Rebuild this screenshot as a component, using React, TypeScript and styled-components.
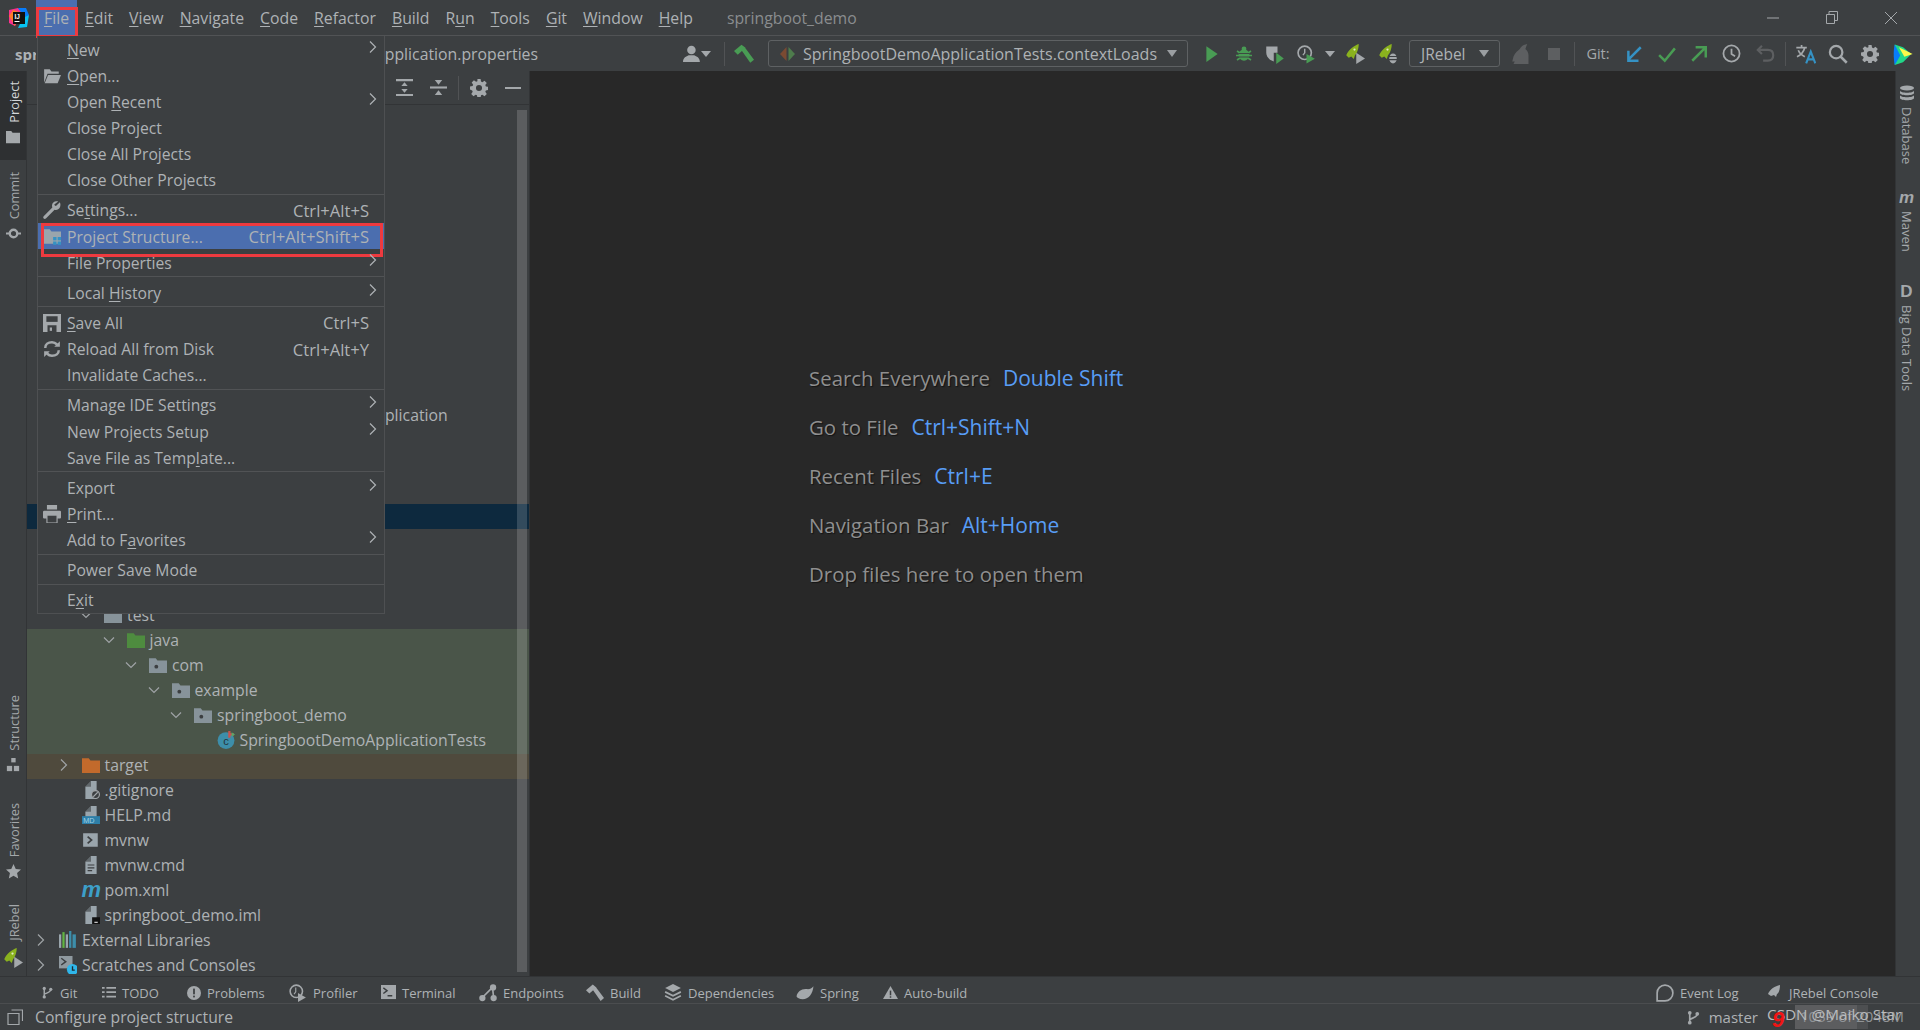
import React from 'react'
import styled, { createGlobalStyle } from 'styled-components'

const UI_FONT = '"Open Sans", "Noto Sans", "Liberation Sans", sans-serif'

const COLORS = {
  chrome: '#3c3f41',
  editor: '#282828',
  line: '#515355',
  dark: '#323436',
  text: '#aeb2b5',
  dim: '#8a8d8f',
  highlight: '#4b6eaf',
  red: '#ee3a3f',
  selected: '#0d293e',
  green: '#4a5549',
  brown: '#4f4a3d',
  icon: '#a4a8ab',
  run: '#499c54',
  blue: '#3592c4',
  link: '#589df6',
}

const GlobalStyle = createGlobalStyle`
  html, body {
    margin: 0;
    padding: 0;
    background: ${COLORS.chrome};
  }
  * {
    box-sizing: border-box;
  }
`

const Page = styled.div`
  position: relative;
  width: 1920px;
  height: 1030px;
  display: flex;
  flex-direction: column;
  overflow: hidden;
  background: ${COLORS.chrome};
  color: ${COLORS.text};
  font-family: ${UI_FONT};
  font-size: 15.8px;
`

const TitleBar = styled.div`
  height: 36px;
  flex: none;
  display: flex;
  align-items: center;
  padding-left: 36px;
  border-bottom: 1px solid ${COLORS.line};
`

const AppLogo = styled.div`
  position: absolute;
  left: 9px;
  top: 8px;
  width: 20px;
  height: 20px;
`

const MenuBarItem = styled.div<{ $open?: boolean }>`
  position: relative;
  height: 35px;
  padding: 0 8px;
  display: flex;
  align-items: center;
  background: ${(p) => (p.$open ? COLORS.highlight : 'transparent')};

  ${(p) =>
    p.$open &&
    `
    &::after {
      content: '';
      position: absolute;
      left: 0;
      right: -1px;
      top: 7px;
      bottom: -3px;
      border: 3px solid ${COLORS.red};
    }
  `}
`

const ProjectTitle = styled.div`
  margin-left: 26px;
  color: ${COLORS.dim};
`

const WindowButtons = styled.div`
  margin-left: auto;
  display: flex;
  align-items: center;
  padding-right: 23px;
  gap: 47px;
  color: ${COLORS.icon};
`

const ToolBar = styled.div`
  height: 35px;
  flex: none;
  display: flex;
  align-items: center;
  padding-right: 3px;
`

const RootCrumb = styled.div`
  width: 36px;
  padding-left: 15px;
  overflow: hidden;
  font-weight: 700;
  font-size: 15px;
  color: ${COLORS.text};
`

const FileCrumb = styled.div`
  margin-left: 340px;
`

const ToolGroup = styled.div`
  margin-left: auto;
  display: flex;
  align-items: center;
  font-size: 14.5px;
`

const ToolSlot = styled.div<{ $w: number }>`
  width: ${(p) => p.$w}px;
  flex: none;
  display: flex;
  align-items: center;
  justify-content: center;
  color: ${COLORS.icon};
`

const ToolSep = styled.div`
  width: 1px;
  height: 24px;
  background: ${COLORS.line};
`

const Combo = styled.div<{ $w: number; $ml: number }>`
  width: ${(p) => p.$w}px;
  margin-left: ${(p) => p.$ml}px;
  height: 27px;
  flex: none;
  display: flex;
  align-items: center;
  justify-content: space-between;
  padding: 0 10px 0 11px;
  border: 1px solid #5e6163;
  border-radius: 3px;
`

const ComboLabel = styled.div<{ $size: number }>`
  display: flex;
  align-items: center;
  gap: 8px;
  font-size: ${(p) => p.$size}px;
`

const Caret = styled.div`
  width: 0;
  height: 0;
  border-left: 5.5px solid transparent;
  border-right: 5.5px solid transparent;
  border-top: 7px solid #9a9ea1;
`

const Body = styled.div`
  flex: 1;
  min-height: 0;
  display: flex;
`

const LeftStripe = styled.div`
  width: 27px;
  flex: none;
  display: flex;
  flex-direction: column;
  border-right: 1px solid ${COLORS.dark};
`

const StripeTab = styled.div<{ $active?: boolean; $pad: string }>`
  display: flex;
  flex-direction: column;
  align-items: center;
  gap: 7px;
  padding: ${(p) => p.$pad};
  background: ${(p) => (p.$active ? '#2e3032' : 'transparent')};
  color: ${(p) => (p.$active ? '#d4d6d8' : COLORS.icon)};
`

const StripeBottom = styled.div`
  margin-top: auto;
  display: flex;
  flex-direction: column;
`

const StripeText = styled.div`
  margin-left: 2px;
  writing-mode: vertical-rl;
  transform: rotate(180deg);
  font-size: 12.8px;
  line-height: 16px;
`

const ProjectPanel = styled.div`
  position: relative;
  width: 503px;
  flex: none;
  display: flex;
  flex-direction: column;
  border-right: 1px solid ${COLORS.dark};
`

const PanelHeader = styled.div`
  height: 34px;
  margin-bottom: -1px;
  flex: none;
  display: flex;
  align-items: center;
  justify-content: flex-end;
  gap: 17px;
  padding-right: 8px;
  color: ${COLORS.icon};
  border-bottom: 1px solid ${COLORS.dark};
`

const PanelHeaderSep = styled.div`
  width: 1px;
  height: 24px;
  margin: 0 -6px;
  background: ${COLORS.line};
`

const TreeRow = styled.div<{ $tone?: 'selected' | 'green' | 'brown'; $depth: number }>`
  height: 25px;
  flex: none;
  display: flex;
  align-items: center;
  padding-left: ${(p) => 10 + p.$depth * 22.5}px;
  padding-bottom: 3px;
  white-space: nowrap;
  background: ${(p) =>
    p.$tone === 'selected'
      ? COLORS.selected
      : p.$tone === 'green'
      ? COLORS.green
      : p.$tone === 'brown'
      ? COLORS.brown
      : 'transparent'};
`

const TreeArrow = styled.div`
  width: 24px;
  margin-left: -2px;
  flex: none;
  display: flex;
  align-items: center;
  color: #9fa3a6;
`

const TreeIcon = styled.div`
  width: 23px;
  flex: none;
  display: flex;
  align-items: center;
`

const ScrollThumb = styled.div`
  position: absolute;
  left: 490px;
  top: 39px;
  width: 10px;
  height: 862px;
  background: rgba(255, 255, 255, 0.16);
`

const Editor = styled.div`
  flex: 1;
  min-width: 0;
  display: flex;
  flex-direction: column;
  padding: 290px 0 0 279px;
  background: ${COLORS.editor};
`

const HintRow = styled.div`
  height: 49px;
  display: flex;
  gap: 13px;
  font-size: 20.4px;
  line-height: 34px;
  color: #8f8f8f;
  text-shadow: 1px 1px 1px #141414;
`

const HintKey = styled.span`
  font-size: 21px;
  color: ${COLORS.link};
  text-shadow: none;
`

const RightStripe = styled.div`
  width: 25px;
  flex: none;
  display: flex;
  flex-direction: column;
  align-items: center;
  padding: 14px 3px 0 0;
  color: ${COLORS.icon};
  border-left: 1px solid ${COLORS.dark};
`

const RightTab = styled.div<{ $mb: number }>`
  display: flex;
  flex-direction: column;
  align-items: center;
  gap: 6px;
  margin-bottom: ${(p) => p.$mb}px;
`

const RightText = styled.div`
  writing-mode: vertical-rl;
  font-size: 13px;
  line-height: 16px;
`

const BoldMark = styled.div<{ $italic?: boolean }>`
  font-family: 'Liberation Sans', sans-serif;
  font-weight: 700;
  font-size: 17px;
  line-height: 14px;
  font-style: ${(p) => (p.$italic ? 'italic' : 'normal')};
`

const PomMark = styled.div`
  font-family: 'Liberation Sans', sans-serif;
  font-weight: 700;
  font-style: italic;
  font-size: 22px;
  line-height: 18px;
  color: #3d9fc9;
`

const ToolWindowBar = styled.div`
  height: 28px;
  flex: none;
  display: flex;
  align-items: center;
  padding: 5px 0 0 41px;
  font-size: 13px;
  border-top: 1px solid ${COLORS.dark};
  border-bottom: 1px solid #4b4d4f;
`

const ToolWindowItem = styled.div<{ $w: number }>`
  width: ${(p) => p.$w}px;
  flex: none;
  display: flex;
  align-items: center;
  gap: 6px;
  white-space: nowrap;
`

const ToolWindowIcon = styled.div`
  flex: none;
  display: flex;
  color: ${COLORS.icon};
`

const ToolWindowRight = styled.div`
  margin-left: auto;
  display: flex;
  align-items: center;
  padding-right: 41px;
`

const StatusBar = styled.div`
  position: relative;
  height: 26px;
  flex: none;
  display: flex;
  align-items: center;
  padding-left: 7px;
  gap: 12px;
`

const StatusText = styled.div`
  font-size: 15.7px;
`

const StatusRight = styled.div`
  margin-left: auto;
  display: flex;
  align-items: center;
  gap: 8px;
  padding-right: 52px;
  font-size: 15px;
`

const MemoryBar = styled.div`
  position: relative;
  width: 73px;
  height: 24px;
  margin-left: 29px;
  background: #4d4f51;
`

const MemoryFill = styled.div`
  width: 62px;
  height: 24px;
  background: #5c5d5f;
`

const MemoryLabel = styled.div`
  position: absolute;
  left: 5px;
  top: 1px;
  white-space: nowrap;
  color: #909396;
`

const Watermark = styled.div`
  position: absolute;
  left: 1767px;
  top: 0;
  font-size: 15.3px;
  white-space: nowrap;
  color: #b9bbbd;
`

const WatermarkNine = styled.span`
  position: absolute;
  left: 5px;
  top: 6px;
  font-family: 'Liberation Sans', sans-serif;
  font-weight: 700;
  font-style: italic;
  font-size: 22px;
  line-height: 20px;
  color: #f01414;
`

const FileMenu = styled.div`
  position: absolute;
  left: 37px;
  top: 36px;
  width: 348px;
  background: ${COLORS.chrome};
  border: 1px solid #4e5052;
  border-top: none;
  z-index: 5;
  font-size: 15.7px;
`

const MenuRow = styled.div<{ $active?: boolean }>`
  position: relative;
  height: 26.15px;
  display: flex;
  align-items: center;
  padding: 1px 5px 0 5px;
  background: ${(p) => (p.$active ? COLORS.highlight : 'transparent')};

  ${(p) =>
    p.$active &&
    `
    &::after {
      content: '';
      position: absolute;
      left: 3px;
      right: 1px;
      top: 0;
      bottom: -8px;
      border: 3px solid ${COLORS.red};
    }
  `}
`

const MenuIcon = styled.div`
  width: 24px;
  flex: none;
  display: flex;
  align-items: center;
  color: ${COLORS.icon};
`

const MenuLabel = styled.div`
  flex: 1;
  white-space: nowrap;
`

const MenuShortcut = styled.div`
  padding-right: 10px;
  font-size: 16.6px;
`

const MenuArrow = styled.div`
  display: flex;
  margin-top: -6px;
  color: ${COLORS.text};
`

const MenuSep = styled.div`
  height: 1px;
  margin: 1px 0 2px;
  background: #515355;
`

const Key = styled.span`
  text-decoration: underline;
  text-underline-offset: 2px;
  text-decoration-thickness: 1px;
`

type IconProps = { size?: number }

const Svg = ({ size = 18, children }: IconProps & { children: React.ReactNode }) => (
  <svg width={size} height={size} viewBox="0 0 16 16" fill="none">
    {children}
  </svg>
)

const Chevron = ({ open }: { open?: boolean }) => (
  <svg width="12" height="12" viewBox="0 0 12 12" fill="none">
    <path d={open ? 'M1 3.5l5 5 5-5' : 'M3 .5l5.5 5.5L3 11.5'} stroke="currentColor" strokeWidth="1.2" />
  </svg>
)

const Folder = ({ color, dot }: { color: string; dot?: boolean }) => (
  <Svg>
    <path d="M0 2h6l1.5 2H16v11H0z" fill={color} />
    {dot && <circle cx="6.5" cy="9.5" r="1.7" fill="#3c3f41" />}
  </Svg>
)

const FilePage = ({ children }: { children?: React.ReactNode }) => (
  <Svg>
    <path d="M8 0h5v16H3V5z" fill="#9aa5ac" />
    <path d="M8 0v5H3z" fill="#3c3f41" opacity="0.6" />
    {children}
  </Svg>
)

const ClassIcon = () => (
  <Svg>
    <circle cx="8" cy="8.5" r="7.5" fill="#3d8eaa" />
    <text x="8" y="12" textAnchor="middle" fontSize="10" fontFamily="Liberation Sans" fill="#24353d">
      c
    </text>
    <path d="M10 0h2v2h3v2h-3v2h-2z" fill="#c75450" />
    <path d="M13 1l3 2-3 2z" fill="#59a869" />
  </Svg>
)

const LibrariesIcon = () => (
  <Svg>
    <rect x="0" y="3" width="2" height="12" fill="#9aa5ac" />
    <rect x="3" y="1" width="2" height="14" fill="#62b543" />
    <rect x="6" y="3" width="2" height="12" fill="#9aa5ac" />
    <rect x="9" y="0" width="2" height="15" fill="#3d8eaa" />
    <rect x="12" y="3" width="3" height="12" fill="#3d8eaa" />
  </Svg>
)

const ScratchIcon = () => (
  <Svg>
    <rect x="0" y="0" width="12" height="11" fill="#8f999f" />
    <path d="M2 2l4 3-4 3" stroke="#3c3f41" strokeWidth="1.3" />
    <circle cx="12" cy="12" r="5" fill="#2fb6ea" />
    <path d="M12 9v3.5h2" stroke="#1e2a30" strokeWidth="1.2" />
  </Svg>
)

const Hammer = ({ color, size = 20 }: { color: string; size?: number }) => (
  <Svg size={size}>
    <path d="M0 5.500L6 .5l3.200 2.500L3 8.500z" fill={color} />
    <path d="M6 5l2.700-2.300L16 12.500 13 15z" fill={color} />
  </Svg>
)

const Play = () => (
  <Svg size={18}>
    <path d="M3 1l10 7-10 7z" fill="#499c54" />
  </Svg>
)

const Bug = () => (
  <Svg size={20}>
    <ellipse cx="8" cy="9" rx="5.4" ry="5.8" fill="#499c54" />
    <circle cx="8" cy="3" r="2.4" fill="#499c54" />
    <path d="M1 5l3 2M15 5l-3 2M0 9.5h4M16 9.5h-4M1 14l3-2M15 14l-3-2" stroke="#499c54" strokeWidth="1.6" />
    <path d="M3 7.5h10M3 11h10" stroke="#3c3f41" strokeWidth="0.9" />
  </Svg>
)

const Coverage = () => (
  <Svg size={20}>
    <path d="M1 2h9v5H7v7l-3-1.5C2 11 1 9 1 7z" fill="#a4a8ab" />
    <path d="M9 7l6 4.5L9 16z" fill="#499c54" />
  </Svg>
)

const Profiler = () => (
  <Svg size={20}>
    <circle cx="6.5" cy="7" r="5.6" stroke="#a4a8ab" strokeWidth="1.4" />
    <path d="M6.5 3.5V7L5 9" stroke="#a4a8ab" strokeWidth="1.2" />
    <path d="M8 8l7 4-7 4z" fill="#499c54" />
  </Svg>
)

const Rocket = ({ badge }: { badge: 'play' | 'bug' }) => (
  <Svg size={20}>
    <path d="M1 9C3 4 8 1 11 0c0 3-1 7-3 9l-1 3-2-2-2 1z" fill="#8ab21e" />
    <circle cx="7.6" cy="4.4" r="0.9" fill="#dfe8c0" />
    {badge === 'play' ? (
      <path d="M9 7l7 4.5L9 16z" fill="#a4a8ab" />
    ) : (
      <>
        <ellipse cx="12" cy="11.5" rx="3" ry="4" fill="#a4a8ab" />
        <path d="M8 10h8M8 12.5h8" stroke="#3c3f41" strokeWidth="0.9" />
      </>
    )}
  </Svg>
)

const Rabbit = () => (
  <Svg size={20}>
    <path d="M2 10c1-3 4-5 5-6 1-2 3-3.5 6-4-1 2-1 3-1.5 4 1.5 1 2.500 3 2.500 5v7H2l1-2H1z" fill="#5d5f61" />
  </Svg>
)

const Stop = () => (
  <svg width="12" height="12" viewBox="0 0 12 12">
    <rect width="12" height="12" fill="#5d5f61" />
  </svg>
)

const ArrowIcon = ({ d, color }: { d: string; color: string }) => (
  <Svg size={18}>
    <path d={d} stroke={color} strokeWidth="2.2" />
  </Svg>
)

const Clock = () => (
  <Svg size={19}>
    <circle cx="8" cy="8" r="6.8" stroke="#a4a8ab" strokeWidth="1.5" />
    <path d="M8 4v4.5l3 1.8" stroke="#a4a8ab" strokeWidth="1.5" />
  </Svg>
)

const Undo = () => (
  <Svg size={19}>
    <path d="M1.5 5H10c3 0 4.500 2 4.500 4.500S13 14 10 14H6" stroke="#5d5f61" strokeWidth="1.8" />
    <path d="M5 1.500L1.500 5 5 8.500" stroke="#5d5f61" strokeWidth="1.8" />
  </Svg>
)

const Translate = () => (
  <Svg size={21}>
    <path d="M1 3.500h8M5 1.500v2M7.500 3.500C6.500 7 4 9.500 1.500 10.500M2.500 5.500c1 2.500 3 4 5 5" stroke="#a4a8ab" strokeWidth="1.3" />
    <path d="M8.500 15.500L12 6.500l3.500 9M10 12.500h4" stroke="#3592c4" strokeWidth="1.6" />
  </Svg>
)

const Search = () => (
  <Svg size={20}>
    <circle cx="6.5" cy="6.5" r="5" stroke="#a4a8ab" strokeWidth="1.8" />
    <path d="M10 10l5 5" stroke="#a4a8ab" strokeWidth="2" />
  </Svg>
)

const Gear = ({ size = 18 }: IconProps) => (
  <Svg size={size}>
    <path
      d="M6.600 0h2.800l.4 2.300 1.200.5 1.900-1.300 2 2-1.300 1.900.5 1.200 2.300.4v2.800l-2.300.4-.5 1.200 1.300 1.900-2 2-1.900-1.300-1.200.5-.4 2.300H6.600l-.4-2.300-1.200-.5-1.900 1.300-2-2 1.300-1.900-.5-1.200L0 9.400V6.600l2.300-.4.5-1.200-1.300-1.900 2-2 1.900 1.300 1.200-.5zM8 5.300a2.700 2.700 0 100 5.400 2.700 2.700 0 000-5.400z"
      fill="#a4a8ab"
    />
  </Svg>
)

const ToolboxLogo = () => (
  <Svg size={22}>
    <path d="M2 1l6 2 6 5-6 6-6 2z" fill="#21d789" />
    <path d="M2 1c-1 4-1 10 0 15l4-7z" fill="#087cfa" />
    <path d="M5 3l10 5-6 2z" fill="#fcf84a" />
  </Svg>
)

const UserIcon = () => (
  <Svg size={18}>
    <circle cx="7.5" cy="4.5" r="3.8" fill="#a4a8ab" />
    <path d="M0 15c0-4 3-5 5-6h5c2 1 5 2 5 6z" fill="#a4a8ab" />
  </Svg>
)

const Triangle = () => (
  <svg width="10" height="6" viewBox="0 0 10 6">
    <path d="M0 0h10L5 6z" fill="#a4a8ab" />
  </svg>
)

const RunConfigIcon = () => (
  <svg width="15" height="16" viewBox="0 0 15 16">
    <path d="M6.500 1v14L0 8z" fill="#7b4a32" />
    <path d="M8.500 1v14L15 8z" fill="#4e7c4c" />
  </svg>
)

const GitBranch = ({ size = 15 }: IconProps) => (
  <Svg size={size}>
    <circle cx="4" cy="3" r="2" fill="#a4a8ab" />
    <circle cx="4" cy="13.5" r="2" fill="#a4a8ab" />
    <circle cx="12" cy="4" r="2" fill="#a4a8ab" />
    <path d="M4 3v10M12 4c0 4-4 4-8 6" stroke="#a4a8ab" strokeWidth="1.8" />
  </Svg>
)

const IdeaMark = () => (
  <svg width="20" height="20" viewBox="0 0 20 20">
    <path d="M0 2l9-2 4 4-7 14-6-3z" fill="#fc318d" />
    <path d="M9 0h8l3 7-4 3z" fill="#087cfa" />
    <path d="M14 10l6-3-2 12-9 1z" fill="#07c3f2" />
    <path d="M0 8l4-6 6 2-4 14z" fill="#fe7c2a" />
    <rect x="4" y="4" width="12" height="12" fill="#111" />
    <text x="5.5" y="10.8" fontSize="6.5" fontWeight="700" fontFamily="Liberation Sans" fill="#fff">
      IJ
    </text>
    <rect x="5.5" y="13" width="5" height="1" fill="#fff" />
  </svg>
)

const MENU_BAR: [string, number][] = [
  ['File', 0],
  ['Edit', 0],
  ['View', 0],
  ['Navigate', 0],
  ['Code', 0],
  ['Refactor', 0],
  ['Build', 0],
  ['Run', 1],
  ['Tools', 0],
  ['Git', 0],
  ['Window', 0],
  ['Help', 0],
]

type MenuEntry = {
  label: string
  mn?: number
  shortcut?: string
  submenu?: boolean
  active?: boolean
  icon?: React.ReactNode
}

const OpenIcon = () => (
  <Svg>
    <path d="M1 2h5l1.5 2H14v2H4L1 14z" fill="#a4a8ab" />
    <path d="M4.500 7H16l-3 7.500H1.500z" fill="#a4a8ab" />
  </Svg>
)

const WrenchIcon = () => (
  <Svg>
    <path d="M15 1l-3.500 3.500-1-.5-.5-1L13.500.5C11-.5 8 1 8 4c0 .7.100 1.300.3 1.800L.8 13.300c-.8.800-.8 1.600-.2 2.200.6.600 1.500.5 2.200-.2l7.500-7.500c3 1 6-1.500 5-5.800z" fill="#a4a8ab" />
  </Svg>
)

const StructureIcon = () => (
  <Svg>
    <path d="M0 1h6l1.500 2H16v11H0z" fill="#9aa5ac" />
    <rect x="9" y="8" width="3" height="3" fill="#3592c4" />
    <rect x="13" y="8" width="3" height="3" fill="#3592c4" />
    <rect x="9" y="12" width="3" height="3" fill="#3592c4" />
    <rect x="13" y="12" width="3" height="3" fill="#3592c4" />
  </Svg>
)

const SaveIcon = () => (
  <Svg>
    <path d="M0 0h16v16H0z" fill="#a4a8ab" />
    <rect x="3" y="2" width="10" height="5" fill="#3c3f41" />
    <rect x="4" y="10" width="8" height="6" fill="#3c3f41" />
    <rect x="6" y="12" width="2" height="3" fill="#a4a8ab" />
  </Svg>
)

const ReloadIcon = () => (
  <Svg>
    <path d="M2 7c0-3 2.500-5 6-5 2 0 3.500 1 4.500 2M14 9c0 3-2.500 5-6 5-2 0-3.500-1-4.500-2" stroke="#a4a8ab" strokeWidth="2.2" />
    <path d="M15 1v5h-5zM1 15v-5h5z" fill="#a4a8ab" />
  </Svg>
)

const PrintIcon = () => (
  <Svg>
    <rect x="3.5" y="0" width="9" height="4" fill="#a4a8ab" />
    <rect x="0" y="5" width="16" height="7" rx="1" fill="#a4a8ab" />
    <rect x="3.5" y="9" width="9" height="7" fill="#3c3f41" stroke="#a4a8ab" />
  </Svg>
)

const MENU_GROUPS: MenuEntry[][] = [
  [
    { label: 'New', mn: 0, submenu: true },
    { label: 'Open...', mn: 0, icon: <OpenIcon /> },
    { label: 'Open Recent', mn: 5, submenu: true },
    { label: 'Close Project' },
    { label: 'Close All Projects' },
    { label: 'Close Other Projects' },
  ],
  [
    { label: 'Settings...', mn: 2, shortcut: 'Ctrl+Alt+S', icon: <WrenchIcon /> },
    { label: 'Project Structure...', shortcut: 'Ctrl+Alt+Shift+S', active: true, icon: <StructureIcon /> },
    { label: 'File Properties', submenu: true },
  ],
  [{ label: 'Local History', mn: 6, submenu: true }],
  [
    { label: 'Save All', mn: 0, shortcut: 'Ctrl+S', icon: <SaveIcon /> },
    { label: 'Reload All from Disk', shortcut: 'Ctrl+Alt+Y', icon: <ReloadIcon /> },
    { label: 'Invalidate Caches...' },
  ],
  [
    { label: 'Manage IDE Settings', submenu: true },
    { label: 'New Projects Setup', submenu: true },
    { label: 'Save File as Template...', mn: 17 },
  ],
  [
    { label: 'Export', submenu: true },
    { label: 'Print...', mn: 0, icon: <PrintIcon /> },
    { label: 'Add to Favorites', mn: 8, submenu: true },
  ],
  [{ label: 'Power Save Mode' }],
  [{ label: 'Exit', mn: 1 }],
]

type Tree = {
  depth: number
  label?: string
  tone?: 'selected' | 'green' | 'brown'
  arrow?: 'open' | 'closed'
  icon?: React.ReactNode
}

const EdgeMark = () => (
  <Svg>
    <path d="M10 4c3 1 3 8 0 9" stroke="#c08a5e" strokeWidth="1.2" />
  </Svg>
)

const blank = (tone?: Tree['tone']): Tree => ({ depth: 0, tone })

const TREE: Tree[] = [
  { depth: 12.9, icon: <EdgeMark /> },
  ...Array.from({ length: 11 }, () => blank()),
  { depth: 7, label: 'SpringbootDemoApplication', icon: <ClassIcon /> },
  blank(),
  blank(),
  blank(),
  blank('selected'),
  blank(),
  blank(),
  blank(),
  { depth: 2, label: 'test', arrow: 'open', icon: <Folder color="#87939a" /> },
  { depth: 3, label: 'java', arrow: 'open', tone: 'green', icon: <Folder color="#4e8c3f" /> },
  { depth: 4, label: 'com', arrow: 'open', tone: 'green', icon: <Folder color="#87939a" dot /> },
  { depth: 5, label: 'example', arrow: 'open', tone: 'green', icon: <Folder color="#87939a" dot /> },
  { depth: 6, label: 'springboot_demo', arrow: 'open', tone: 'green', icon: <Folder color="#87939a" dot /> },
  { depth: 7, label: 'SpringbootDemoApplicationTests', tone: 'green', icon: <ClassIcon /> },
  { depth: 1, label: 'target', arrow: 'closed', tone: 'brown', icon: <Folder color="#c26a2c" /> },
  {
    depth: 1,
    label: '.gitignore',
    icon: (
      <FilePage>
        <circle cx="12" cy="12" r="3.5" fill="#3c3f41" stroke="#a4a8ab" />
        <path d="M10 14l4-4" stroke="#a4a8ab" />
      </FilePage>
    ),
  },
  {
    depth: 1,
    label: 'HELP.md',
    icon: (
      <FilePage>
        <rect x="0" y="9" width="16" height="7" fill="#2e7fa8" />
        <text x="1" y="15" fontSize="6.5" fontFamily="Liberation Sans" fill="#9fd0e6">
          MD
        </text>
      </FilePage>
    ),
  },
  {
    depth: 1,
    label: 'mvnw',
    icon: (
      <Svg>
        <rect x="1" y="2" width="13" height="12" fill="#9aa5ac" />
        <path d="M5 5l3.5 3L5 11" stroke="#3c3f41" strokeWidth="1.5" />
      </Svg>
    ),
  },
  {
    depth: 1,
    label: 'mvnw.cmd',
    icon: (
      <FilePage>
        <path d="M5 8h6M5 10.5h6M5 13h4" stroke="#3c3f41" />
      </FilePage>
    ),
  },
  { depth: 1, label: 'pom.xml', icon: <PomMark>m</PomMark> },
  {
    depth: 1,
    label: 'springboot_demo.iml',
    icon: (
      <FilePage>
        <rect x="9" y="10" width="7" height="6" fill="#111" />
        <rect x="11" y="14" width="3" height="1" fill="#ddd" />
      </FilePage>
    ),
  },
  { depth: 0, label: 'External Libraries', arrow: 'closed', icon: <LibrariesIcon /> },
  { depth: 0, label: 'Scratches and Consoles', arrow: 'closed', icon: <ScratchIcon /> },
]

const BOTTOM_TOOLS: { label: string; w: number; icon: React.ReactNode }[] = [
  { label: 'Git', w: 61, icon: <GitBranch size={13} /> },
  {
    label: 'TODO',
    w: 85,
    icon: (
      <Svg size={14}>
        <path d="M0 2h3M5 2h11M0 7h3M5 7h11M0 12h3M5 12h11" stroke="#a4a8ab" strokeWidth="2" />
      </Svg>
    ),
  },
  {
    label: 'Problems',
    w: 102,
    icon: (
      <Svg size={14}>
        <circle cx="8" cy="8" r="8" fill="#a4a8ab" />
        <rect x="7" y="3" width="2" height="6.5" fill="#3c3f41" />
        <rect x="7" y="11" width="2" height="2" fill="#3c3f41" />
      </Svg>
    ),
  },
  {
    label: 'Profiler',
    w: 92,
    icon: (
      <Svg>
        <circle cx="6.5" cy="6.5" r="5.5" stroke="#a4a8ab" strokeWidth="1.4" />
        <path d="M6 3v4l-1.5 2" stroke="#a4a8ab" />
        <path d="M8 8l7 4-7 4z" fill="#a4a8ab" />
      </Svg>
    ),
  },
  {
    label: 'Terminal',
    w: 98,
    icon: (
      <Svg size={15}>
        <rect x="0" y="0" width="16" height="15" fill="#a4a8ab" />
        <path d="M2.500 3l4 3-4 3M7 11.500h5" stroke="#3c3f41" strokeWidth="1.5" />
      </Svg>
    ),
  },
  {
    label: 'Endpoints',
    w: 107,
    icon: (
      <Svg>
        <circle cx="3" cy="12.5" r="2.8" fill="#a4a8ab" />
        <circle cx="12.5" cy="3" r="2.8" fill="#a4a8ab" />
        <circle cx="13" cy="12.5" r="2.8" fill="#a4a8ab" />
        <path d="M3 12l9-9 1 9" stroke="#a4a8ab" strokeWidth="1.5" />
      </Svg>
    ),
  },
  { label: 'Build', w: 78, icon: <Hammer color="#a4a8ab" size={18} /> },
  {
    label: 'Dependencies',
    w: 132,
    icon: (
      <Svg>
        <path d="M8 0l7 3.500L8 7 1 3.500z" fill="#a4a8ab" />
        <path d="M1 7l7 3.500L15 7M1 10.500L8 14l7-3.500" stroke="#a4a8ab" strokeWidth="1.5" />
      </Svg>
    ),
  },
  {
    label: 'Spring',
    w: 87,
    icon: (
      <Svg>
        <path d="M15.500 2C15 9 11 13.500 6 13.500c-3 0-5-1.500-5.500-2.500C1 7 5 4 9.500 4.500 12 4.800 14 4 15.500 2z" fill="#a4a8ab" />
      </Svg>
    ),
  },
  {
    label: 'Auto-build',
    w: 90,
    icon: (
      <Svg size={15}>
        <path d="M8 1l8 14H0z" fill="#a4a8ab" />
        <rect x="7.2" y="6" width="1.6" height="5" fill="#3c3f41" />
        <rect x="7.2" y="12" width="1.6" height="1.6" fill="#3c3f41" />
      </Svg>
    ),
  },
]

const HINTS: [string, string?][] = [
  ['Search Everywhere', 'Double Shift'],
  ['Go to File', 'Ctrl+Shift+N'],
  ['Recent Files', 'Ctrl+E'],
  ['Navigation Bar', 'Alt+Home'],
  ['Drop files here to open them'],
]

// underlines the mnemonic letter the way the IDE menus do
function Mnemonic({ text, at }: { text: string; at?: number }) {
  if (at === undefined) return <>{text}</>
  return (
    <>
      {text.slice(0, at)}
      <Key>{text[at]}</Key>
      {text.slice(at + 1)}
    </>
  )
}

function MenuPopup() {
  return (
    <FileMenu>
      {MENU_GROUPS.map((group, i) => (
        <React.Fragment key={i}>
          {i > 0 && <MenuSep />}
          {group.map((item) => (
            <MenuRow key={item.label} $active={item.active}>
              <MenuIcon>{item.icon}</MenuIcon>
              <MenuLabel>
                <Mnemonic text={item.label} at={item.mn} />
              </MenuLabel>
              {item.shortcut && <MenuShortcut>{item.shortcut}</MenuShortcut>}
              {item.submenu && (
                <MenuArrow>
                  <Chevron />
                </MenuArrow>
              )}
            </MenuRow>
          ))}
        </React.Fragment>
      ))}
    </FileMenu>
  )
}

export default function App() {
  return (
    <Page>
      <GlobalStyle />
      <AppLogo>
        <IdeaMark />
      </AppLogo>
      <TitleBar>
        {MENU_BAR.map(([name, at]) => (
          <MenuBarItem key={name} $open={name === 'File'}>
            <Mnemonic text={name} at={at} />
          </MenuBarItem>
        ))}
        <ProjectTitle>springboot_demo</ProjectTitle>
        <WindowButtons>
          <svg width="12" height="12" viewBox="0 0 12 12">
            <path d="M0 6h12" stroke="currentColor" />
          </svg>
          <svg width="12" height="13" viewBox="0 0 12 13" fill="none">
            <path d="M.5 3.500h8v9h-8zM3 3.500V.5h8.500v9H8.500" stroke="currentColor" />
          </svg>
          <svg width="12" height="12" viewBox="0 0 12 12">
            <path d="M0 0l12 12M12 0L0 12" stroke="currentColor" />
          </svg>
        </WindowButtons>
      </TitleBar>
      <ToolBar>
        <RootCrumb>spr</RootCrumb>
        <FileCrumb>application.properties</FileCrumb>
        <ToolGroup>
          <ToolSlot $w={40}>
            <UserIcon />
            <Triangle />
          </ToolSlot>
          <ToolSlot $w={14}>
            <ToolSep />
          </ToolSlot>
          <ToolSlot $w={25}>
            <Hammer color={COLORS.run} />
          </ToolSlot>
          <Combo $w={420} $ml={12}>
            <ComboLabel $size={16}>
              <RunConfigIcon />
              SpringbootDemoApplicationTests.contextLoads
            </ComboLabel>
            <Caret />
          </Combo>
          <ToolSlot $w={48}>
            <Play />
          </ToolSlot>
          <ToolSlot $w={16}>
            <Bug />
          </ToolSlot>
          <ToolSlot $w={45}>
            <Coverage />
          </ToolSlot>
          <ToolSlot $w={19}>
            <Profiler />
          </ToolSlot>
          <ToolSlot $w={27}>
            <Triangle />
          </ToolSlot>
          <ToolSlot $w={24}>
            <Rocket badge="play" />
          </ToolSlot>
          <ToolSlot $w={42}>
            <Rocket badge="bug" />
          </ToolSlot>
          <Combo $w={91} $ml={0}>
            <ComboLabel $size={15.5}>JRebel</ComboLabel>
            <Caret />
          </Combo>
          <ToolSlot $w={42}>
            <Rabbit />
          </ToolSlot>
          <ToolSlot $w={24}>
            <Stop />
          </ToolSlot>
          <ToolSlot $w={16}>
            <ToolSep />
          </ToolSlot>
          <ToolSlot $w={32}>Git:</ToolSlot>
          <ToolSlot $w={40}>
            <ArrowIcon d="M14 2L3 13M3 5v9h9" color="#3592c4" />
          </ToolSlot>
          <ToolSlot $w={26}>
            <ArrowIcon d="M1 9l5 5L15 3" color="#499c54" />
          </ToolSlot>
          <ToolSlot $w={37}>
            <ArrowIcon d="M2 14L13 3M5 2h9v9" color="#499c54" />
          </ToolSlot>
          <ToolSlot $w={28}>
            <Clock />
          </ToolSlot>
          <ToolSlot $w={40}>
            <Undo />
          </ToolSlot>
          <ToolSep />
          <ToolSlot $w={38}>
            <Translate />
          </ToolSlot>
          <ToolSlot $w={28}>
            <Search />
          </ToolSlot>
          <ToolSlot $w={36}>
            <Gear />
          </ToolSlot>
          <ToolSlot $w={29}>
            <ToolboxLogo />
          </ToolSlot>
        </ToolGroup>
      </ToolBar>
      <Body>
        <LeftStripe>
          <StripeTab $active $pad="10px 0 16px">
            <StripeText>Project</StripeText>
            <Svg size={14}>
              <path d="M0 1h6l1.500 2H16v12H0z" fill="#a4a8ab" />
            </Svg>
          </StripeTab>
          <StripeTab $pad="12px 0 0">
            <StripeText>Commit</StripeText>
            <Svg size={15}>
              <circle cx="8" cy="8" r="4" stroke="#a4a8ab" strokeWidth="2.5" />
              <path d="M0 8h4M12 8h4" stroke="#a4a8ab" strokeWidth="2" />
            </Svg>
          </StripeTab>
          <StripeBottom>
            <StripeTab $pad="0 0 31px">
              <StripeText>Structure</StripeText>
              <Svg size={14}>
                <rect x="6" y="0" width="5" height="5" fill="#a4a8ab" />
                <rect x="1" y="9" width="6" height="6" fill="#a4a8ab" />
                <rect x="9" y="9" width="6" height="6" fill="#a4a8ab" />
              </Svg>
            </StripeTab>
            <StripeTab $pad="0 0 25px">
              <StripeText>Favorites</StripeText>
              <Svg size={15}>
                <path d="M8 0l2.400 5.300 5.600.6-4.200 3.800 1.200 5.800L8 12.600l-5 2.900 1.200-5.800L0 5.900l5.600-.6z" fill="#a4a8ab" />
              </Svg>
            </StripeTab>
            <StripeTab $pad="0 0 8px">
              <StripeText>JRebel</StripeText>
              <Rocket badge="play" />
            </StripeTab>
          </StripeBottom>
        </LeftStripe>
        <ProjectPanel>
          <PanelHeader>
            <Svg size={17}>
              <path d="M0 1h16M0 15h16" stroke="#a4a8ab" strokeWidth="2" />
              <path d="M8 3l3 3.500H5zM8 13l-3-3.500h6z" fill="#a4a8ab" />
            </Svg>
            <Svg size={17}>
              <path d="M0 8h16" stroke="#a4a8ab" strokeWidth="2" />
              <path d="M4.500 1h7L8 5.500zM4.500 15h7L8 10.500z" fill="#a4a8ab" />
            </Svg>
            <PanelHeaderSep />
            <Gear />
            <svg width="16" height="16" viewBox="0 0 16 16">
              <path d="M0 8h16" stroke="#a4a8ab" strokeWidth="2" />
            </svg>
          </PanelHeader>
          {TREE.map((row, i) => (
            <TreeRow key={i} $depth={row.depth} $tone={row.tone}>
              {(row.icon || row.arrow) && (
                <TreeArrow>{row.arrow && <Chevron open={row.arrow === 'open'} />}</TreeArrow>
              )}
              {row.icon && <TreeIcon>{row.icon}</TreeIcon>}
              {row.label}
            </TreeRow>
          ))}
          <ScrollThumb />
        </ProjectPanel>
        <Editor>
          {HINTS.map(([text, key]) => (
            <HintRow key={text}>
              {text}
              {key && <HintKey>{key}</HintKey>}
            </HintRow>
          ))}
        </Editor>
        <RightStripe>
          <RightTab $mb={27}>
            <Svg size={16}>
              <ellipse cx="8" cy="3" rx="7" ry="2.5" fill="#a4a8ab" />
              <path d="M1 5.500c0 3 14 3 14 0v2.500c0 3-14 3-14 0zM1 10c0 3 14 3 14 0v3c0 3-14 3-14 0z" fill="#a4a8ab" />
            </Svg>
            <RightText>Database</RightText>
          </RightTab>
          <RightTab $mb={33}>
            <BoldMark $italic>m</BoldMark>
            <RightText>Maven</RightText>
          </RightTab>
          <RightTab $mb={0}>
            <BoldMark>D</BoldMark>
            <RightText>Big Data Tools</RightText>
          </RightTab>
        </RightStripe>
      </Body>
      <ToolWindowBar>
        {BOTTOM_TOOLS.map((tool) => (
          <ToolWindowItem key={tool.label} $w={tool.w}>
            <ToolWindowIcon>{tool.icon}</ToolWindowIcon>
            {tool.label}
          </ToolWindowItem>
        ))}
        <ToolWindowRight>
          <ToolWindowItem $w={111}>
            <ToolWindowIcon>
              <Svg>
                <path d="M1 8a7 7 0 117 7H1z" stroke="#a4a8ab" strokeWidth="1.5" />
              </Svg>
            </ToolWindowIcon>
            Event Log
          </ToolWindowItem>
          <ToolWindowItem $w={112}>
            <ToolWindowIcon>
              <Svg size={16}>
                <path d="M1 9C3 4 8 1 13 0c0 4-1 8-3 9l-1 3-2-2-3 1z" fill="#a4a8ab" />
              </Svg>
            </ToolWindowIcon>
            JRebel Console
          </ToolWindowItem>
        </ToolWindowRight>
      </ToolWindowBar>
      <StatusBar>
        <Svg size={16}>
          <path d="M4.500 1h11v11M1 4.500h11v11H1z" stroke="#a4a8ab" strokeWidth="1.2" />
        </Svg>
        <StatusText>Configure project structure</StatusText>
        <StatusRight>
          <GitBranch />
          master
          <MemoryBar>
            <MemoryFill />
            <MemoryLabel>1039 of 2048M</MemoryLabel>
          </MemoryBar>
        </StatusRight>
        <Watermark>
          CSDN @Maiko Star
          <WatermarkNine>9</WatermarkNine>
        </Watermark>
      </StatusBar>
      <MenuPopup />
    </Page>
  )
}
